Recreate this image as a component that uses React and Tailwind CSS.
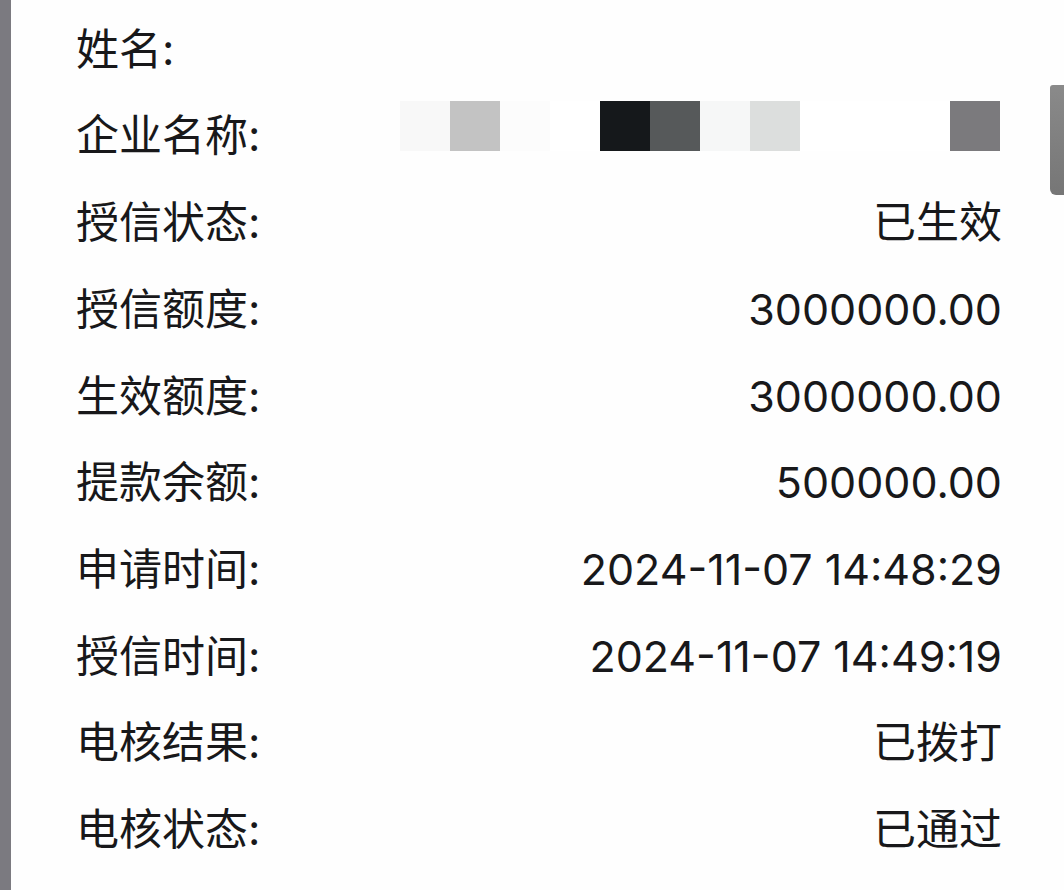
import React from "react";

const rows = [
  { label: "姓名:", value: "" },
  { label: "企业名称:", value: null },
  { label: "授信状态:", value: "已生效" },
  { label: "授信额度:", value: "3000000.00" },
  { label: "生效额度:", value: "3000000.00" },
  { label: "提款余额:", value: "500000.00" },
  { label: "申请时间:", value: "2024-11-07 14:48:29" },
  { label: "授信时间:", value: "2024-11-07 14:49:19" },
  { label: "电核结果:", value: "已拨打" },
  { label: "电核状态:", value: "已通过" },
];

// mosaic blocks covering the company name
const blocks = [
  "#f8f8f8",
  "#c3c3c3",
  "#fcfcfc",
  "#ffffff",
  "#15181b",
  "#56595a",
  "#f6f7f7",
  "#dcdedd",
  "#ffffff",
  "#ffffff",
  "#ffffff",
  "#7b7a7d",
];

function Mosaic() {
  return (
    <div className="flex mt-[8px] mr-[2px]">
      {blocks.map((c, i) => (
        <div key={i} className="w-[50px] h-[50px]" style={{ backgroundColor: c }} />
      ))}
    </div>
  );
}

export default function App() {
  return (
    <div
      className="relative flex w-[1064px] h-[890px] overflow-hidden bg-[#fefefe] text-[#18181a]"
      style={{ fontFamily: "Inter, 'Noto Sans CJK SC', sans-serif" }}
    >
      <div className="w-[11px] shrink-0 bg-[#7b7a80]" />
      <div className="flex-1 pt-[6px] pl-[65px] pr-[62px]">
        {rows.map((r) => (
          <div
            key={r.label}
            className={`flex justify-between h-[86.67px] text-[43px] ${
              r.value === null ? "items-start" : "items-center"
            }`}
          >
            <span className={r.value === null ? "mt-[10px]" : ""}>{r.label}</span>
            {r.value === null ? <Mosaic /> : <span>{r.value}</span>}
          </div>
        ))}
      </div>
      <div className="absolute left-[1050px] top-[85px] w-[14px] h-[110px] bg-gradient-to-b from-[#8a8a8a] to-[#767676] rounded-tl-[3px] rounded-bl-[6px]" />
    </div>
  );
}
